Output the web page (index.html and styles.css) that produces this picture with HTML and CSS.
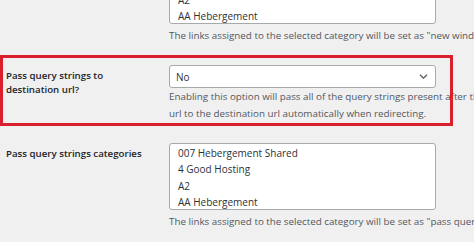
FILE: index.html
```html
<!DOCTYPE html>
<html lang="en">
<head>
    <meta charset="UTF-8">
    <meta name="viewport" content="width=device-width, initial-scale=1.0">
    <title>Link settings</title>
    <link rel="stylesheet" href="styles.css">
</head>
<body>

<div class="settings">

    <!-- new window categories (scrolled, top part is off screen) -->
    <div class="row">
        <div class="row-label">New window categories</div>
        <div class="row-field">
            <div class="listbox">
                <div class="option">007 Hebergement Shared</div>
                <div class="option">4 Good Hosting</div>
                <div class="option">A2</div>
                <div class="option">AA Hebergement</div>
            </div>
            <p class="description">The links assigned to the selected category will be set as "new window".</p>
        </div>
    </div>

    <div class="row">
        <div class="row-label">Pass query strings to destination url?</div>
        <div class="row-field">
            <div class="select-box">
                <span>No</span>
                <svg class="chevron" width="9" height="5" viewBox="0 0 9 5">
                    <path d="M1 0.8l3.5 3.4 3.5-3.4" fill="none" stroke="#50575e" stroke-width="1.2"/>
                </svg>
            </div>
            <p class="description">Enabling this option will pass all of the query strings present after the short<br>url to the destination url automatically when redirecting.</p>
        </div>
    </div>

    <div class="row">
        <div class="row-label">Pass query strings categories</div>
        <div class="row-field">
            <div class="listbox">
                <div class="option">007 Hebergement Shared</div>
                <div class="option">4 Good Hosting</div>
                <div class="option">A2</div>
                <div class="option">AA Hebergement</div>
            </div>
            <p class="description">The links assigned to the selected category will be set as "pass query strings".</p>
        </div>
    </div>

</div>

<!-- red annotation drawn over the screenshot -->
<div class="highlight"></div>

</body>
</html>
```

FILE: styles.css
```css
html, body {
    overflow: hidden;
}

body {
    margin: 0;
    position: relative;
    font-family: "Open Sans", "Noto Sans", sans-serif;
    font-size: 10px;
    color: #1d2327;
    background-color: #f0f0f1;
}

.settings {
    display: flex;
    flex-direction: column;
    gap: 21px;
    margin-top: -43px;
}

.row {
    display: flex;
}

.row-label {
    flex: none;
    width: 150px;
    padding: 0 13px 0 6px;
    margin-top: 4px;
    font-size: 9.7px;
    font-weight: 600;
    line-height: 14px;
}

.row-field {
    flex: none;
    width: 267px;
}

.listbox {
    height: 67px;
    box-sizing: border-box;
    padding: 1px 0 0 8px;
    background-color: #fff;
    border: 1px solid #a7aaad;
    border-radius: 3px;
    overflow: hidden;
    color: #2c3338;
}

.option {
    line-height: 16.3px;
    white-space: nowrap;
}

.select-box {
    height: 23px;
    box-sizing: border-box;
    display: flex;
    align-items: center;
    justify-content: space-between;
    padding: 0 7px 0 6px;
    background-color: #fff;
    border: 1px solid #a7aaad;
    border-radius: 3px;
    color: #2c3338;
}

.description {
    margin: 3px 0 0;
    font-size: 9.8px;
    line-height: 17px;
    color: #50575e;
    white-space: nowrap;
}

.select-box + .description {
    margin-top: 0;
}

.highlight {
    position: absolute;
    left: 0;
    top: 55px;
    width: 453px;
    height: 71px;
    box-sizing: border-box;
    border: 3px solid #d9202c;
    pointer-events: none;
}
```
